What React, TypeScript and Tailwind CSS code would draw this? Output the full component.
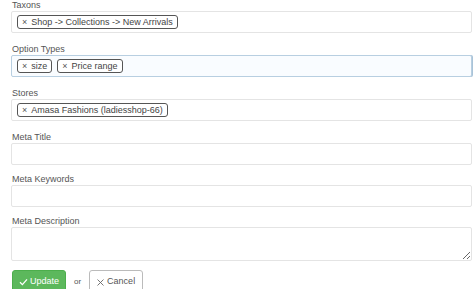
import React from 'react';

const Chip = ({ label }: { label: string }) => (
  <span className="inline-flex items-center h-[14px] px-[4px] rounded-[3px] border border-[#555] text-[9px] leading-none text-[#444] bg-white">
    <span className="mr-[4px] text-[9px] text-[#555]">×</span>
    {label}
  </span>
);

const Field = ({
  label,
  tight,
  children,
}: {
  label: string;
  tight?: boolean;
  children: React.ReactNode;
}) => (
  <div className={tight ? 'mb-[9px]' : 'mb-[11px]'}>
    <label className="block text-[9px] leading-[10px] text-[#555] pl-[1px] mb-[1px]">{label}</label>
    {children}
  </div>
);

const box = 'h-[22px] w-full rounded-[2px] border border-[#e4e4e4] bg-white flex items-center gap-[5px] px-[5px]';

const App = () => {
  return (
    <div className="w-[474px] h-[289px] overflow-hidden bg-white pl-[11px] pr-[2px]" style={{ fontFamily: '"Liberation Sans", Arial, sans-serif' }}>
      <Field label="Taxons">
        <div className={box}>
          <Chip label="Shop -> Collections -> New Arrivals" />
        </div>
      </Field>

      <Field label="Option Types">
        <div className="h-[22px] w-full rounded-[2px] border border-[#b8cfe1] bg-[#f9fcff] shadow-[1px_0_0_#a9c3d8] flex items-center gap-[5px] px-[5px]">
          <Chip label="size" />
          <Chip label="Price range" />
        </div>
      </Field>

      <Field label="Stores">
        <div className={box}>
          <Chip label="Amasa Fashions (ladiesshop-66)" />
        </div>
      </Field>

      <Field label="Meta Title" tight>
        <input className="block h-[22px] w-full rounded-[2px] border border-[#e4e4e4] bg-white outline-none" />
      </Field>

      <Field label="Meta Keywords" tight>
        <input className="block h-[22px] w-full rounded-[2px] border border-[#e4e4e4] bg-white outline-none" />
      </Field>

      <div className="mb-[9px]">
        <label className="block text-[9px] leading-[10px] text-[#555] pl-[1px] mb-[1px]">Meta Description</label>
        <textarea className="block h-[34px] w-full rounded-[2px] border border-[#e4e4e4] bg-white outline-none" />
      </div>

      <div className="flex items-center">
        <button className="h-[24px] w-[54px] ml-[1px] rounded-[3px] bg-[#5cb85c] border border-[#4cae4c] text-white text-[9px] flex items-center justify-center gap-[2px]">
          <svg width="9" height="8" viewBox="0 0 9 8" fill="none" stroke="white" strokeWidth="1.3">
            <path d="M1 4.2 L3.4 6.6 L8 1.4" />
          </svg>
          Update
        </button>
        <span className="mx-[8px] text-[8px] text-[#555]">or</span>
        <button className="h-[24px] w-[54px] rounded-[3px] bg-white border border-[#bbb] text-[#555] text-[9px] flex items-center justify-center gap-[3px]">
          <svg width="7" height="7" viewBox="0 0 7 7" fill="none" stroke="#666" strokeWidth="0.9">
            <path d="M0.5 0.5 L6.5 6.5 M6.5 0.5 L0.5 6.5" />
          </svg>
          Cancel
        </button>
      </div>
    </div>
  );
};

export default App;
